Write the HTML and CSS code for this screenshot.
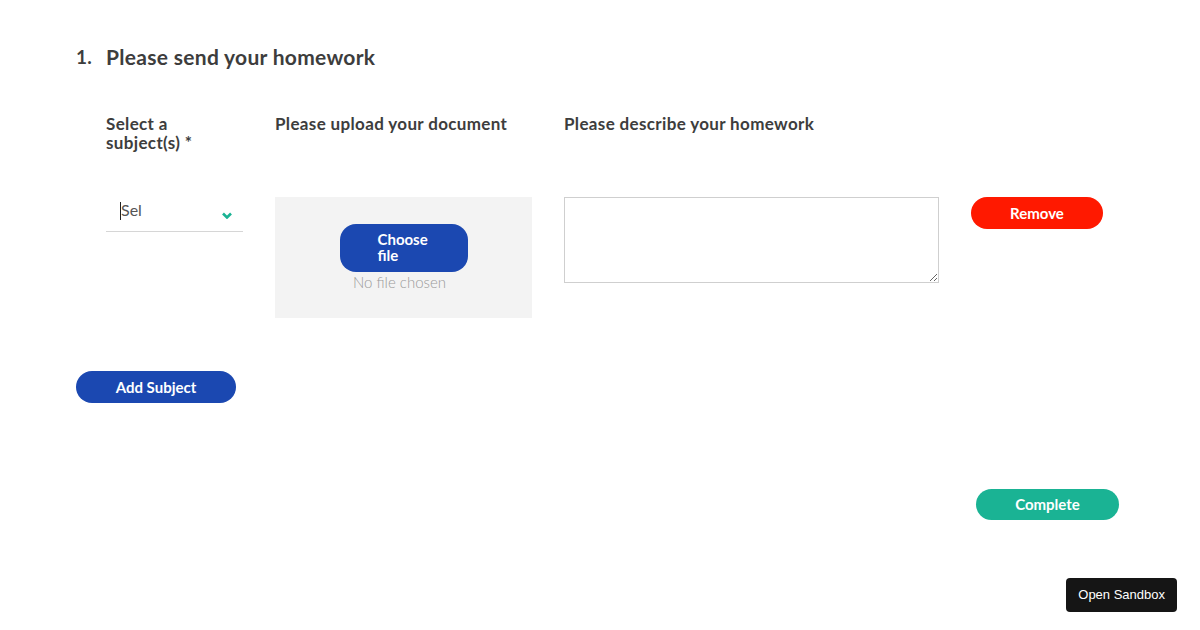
FILE: index.html
```html
<!DOCTYPE html>
<html lang="en">
<head>
  <meta charset="UTF-8">
  <meta name="viewport" content="width=device-width, initial-scale=1.0">
  <title>Homework</title>
  <link rel="stylesheet" href="styles.css">
</head>
<body>
  <div id="page">
    <h2 class="step-title"><span class="step-num">1.</span>Please send your homework</h2>

    <div class="subject-row">
      <div class="col col-subject">
        <label class="col-label narrow">Select a subject(s) *</label>
        <div class="fake-select">
          <span class="caret"></span>
          <span class="select-text">Sel</span>
          <svg class="chevron" width="10" height="7" viewBox="0 0 10 7"><path d="M1 1.5 L5 5.5 L9 1.5" fill="none" stroke="#1ab394" stroke-width="2.6"/></svg>
        </div>
      </div>

      <div class="col col-upload">
        <label class="col-label">Please upload your document</label>
        <div class="upload-box">
          <button class="btn btn-blue btn-file">Choose file</button>
          <span class="no-file">No file chosen</span>
        </div>
      </div>

      <div class="col col-desc">
        <label class="col-label">Please describe your homework</label>
        <textarea class="desc-box"></textarea>
      </div>

      <div class="col col-remove">
        <div class="col-label"></div>
        <button class="btn btn-red">Remove</button>
      </div>
    </div>

    <button class="btn btn-blue btn-add">Add Subject</button>

    <div class="footer-row">
      <button class="btn btn-teal">Complete</button>
    </div>
  </div>

  <a class="sandbox-link" href="#">Open Sandbox</a>
</body>
</html>
```

FILE: styles.css
```css
body {
  margin: 0;
  background: #fff;
  font-family: 'Lato', 'Open Sans', sans-serif;
  color: #3d3d3d;
}

#page {
  padding: 44px 81px 0 76px;
}

.step-title {
  margin: 0;
  font-size: 21px;
  font-weight: 700;
  line-height: 26px;
  letter-spacing: 0.3px;
  display: flex;
}

.step-num {
  width: 30px;
  font-size: 19px;
}

.subject-row {
  display: flex;
  gap: 32px;
  margin-top: 40px;
  padding-left: 30px;
}

.col {
  display: flex;
  flex-direction: column;
}

.col-label {
  display: block;
  box-sizing: border-box;
  height: 87px;
  padding-top: 4px;
  font-size: 17px;
  font-weight: 700;
  line-height: 19px;
  letter-spacing: 0.35px;
}

.col-label.narrow {
  width: 118px;
}

.col-subject { width: 137px; }
.col-upload { width: 257px; }
.col-desc { width: 375px; }

.fake-select {
  height: 34px;
  border-bottom: 1px solid #d6d6d6;
  display: flex;
  align-items: center;
  padding-left: 14px;
}

.caret {
  width: 1px;
  height: 18px;
  background: #222;
  margin-top: -7px;
}

.select-text {
  font-size: 16px;
  color: #555;
  margin-top: -9px;
}

.chevron {
  margin-left: auto;
  margin-right: 11px;
  margin-top: 2px;
}

.upload-box {
  background: #f3f3f3;
  height: 121px;
  display: flex;
  flex-direction: column;
  align-items: center;
  padding-top: 27px;
  box-sizing: border-box;
}

.no-file {
  font-size: 15px;
  font-weight: 300;
  color: #9a9a9a;
  margin-top: 1px;
  margin-left: -8px;
}

.desc-box {
  width: 375px;
  height: 86px;
  box-sizing: border-box;
  border: 1px solid #cfcfcf;
  margin: 0;
  resize: vertical;
}

.btn {
  border: none;
  border-radius: 16px;
  color: #fff;
  font-family: inherit;
  font-weight: 700;
  font-size: 15px;
  padding-bottom: 2px;
  cursor: pointer;
}

.btn-blue { background: #1b48b1; }
.btn-red { background: #ff1900; width: 132px; height: 32px; }
.btn-teal { background: #1ab394; width: 143px; height: 31px; }

.btn-file {
  width: 128px;
  height: 48px;
  padding: 0 38px 2px;
  text-align: left;
  line-height: 16px;
}

.btn-add {
  margin-top: 53px;
  width: 160px;
  height: 32px;
}

.footer-row {
  display: flex;
  justify-content: flex-end;
  margin-top: 86px;
}

.sandbox-link {
  position: fixed;
  right: 23px;
  bottom: 18px;
  background: #151515;
  color: #fff;
  border-radius: 4px;
  font-family: 'Liberation Sans', Arial, sans-serif;
  font-size: 13px;
  line-height: 16px;
  padding: 9px 12px;
  text-decoration: none;
}
```
